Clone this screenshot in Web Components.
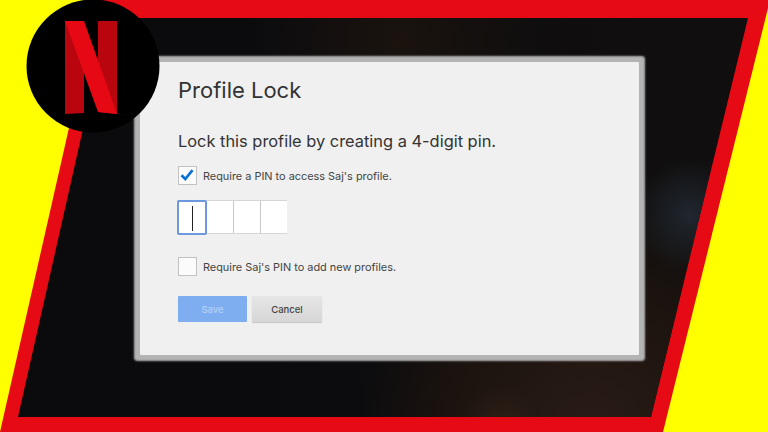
<!DOCTYPE html>
<html>
<head>
<meta charset="utf-8">
<title>Profile Lock</title>
<style>
  html, body { margin: 0; background: #ffff00; }
</style>
</head>
<body>
<thumb-frame>
  <lock-dialog title-text="Profile Lock" lead="Lock this profile by creating a 4-digit pin.">
    <check-row checked>Require a PIN to access Saj's profile.</check-row>
    <pin-input></pin-input>
    <check-row>Require Saj's PIN to add new profiles.</check-row>
    <form-buttons></form-buttons>
  </lock-dialog>
</thumb-frame>

<script>
//
// TEMPLATES
//
const frameTemplate = document.createElement("template");
frameTemplate.innerHTML = `
  <style>
    :host {
      display: block;
      position: relative;
      width: 768px;
      height: 432px;
      overflow: hidden;
      font-family: Inter, "Liberation Sans", sans-serif;
    }
    .backdrop { position: absolute; left: 0; top: 0; }
    .content {
      position: relative;
      box-sizing: border-box;
      height: 100%;
      padding: 62px 0 0 140px;
    }
    .badge { position: absolute; left: 26px; top: 0; }
  </style>
  <svg class="backdrop" width="768" height="432" viewBox="0 0 768 432">
    <defs>
      <linearGradient id="base" gradientUnits="userSpaceOnUse" x1="250" y1="0" x2="640" y2="0">
        <stop offset="0" stop-color="#0b0b0e"/>
        <stop offset="1" stop-color="#100e0e"/>
      </linearGradient>
      <radialGradient id="warm" gradientUnits="userSpaceOnUse" cx="590" cy="430" r="230">
        <stop offset="0" stop-color="#2a1c17"/>
        <stop offset="0.55" stop-color="#21160f" stop-opacity="0.8"/>
        <stop offset="1" stop-color="#21160f" stop-opacity="0"/>
      </radialGradient>
      <radialGradient id="spot" gradientUnits="userSpaceOnUse" cx="500" cy="425" r="40">
        <stop offset="0" stop-color="#33241a" stop-opacity="0.6"/>
        <stop offset="1" stop-color="#33241a" stop-opacity="0"/>
      </radialGradient>
      <radialGradient id="cool" gradientUnits="userSpaceOnUse" cx="690" cy="215" r="58">
        <stop offset="0" stop-color="#20272f"/>
        <stop offset="1" stop-color="#20272f" stop-opacity="0"/>
      </radialGradient>
      <radialGradient id="top" gradientUnits="userSpaceOnUse" cx="400" cy="40" r="150">
        <stop offset="0" stop-color="#1a130e"/>
        <stop offset="1" stop-color="#1a130e" stop-opacity="0"/>
      </radialGradient>
    </defs>
    <rect width="768" height="432" fill="#ffff00"/>
    <polygon points="98,0 770,0 663,432 0,432" fill="#e50a13"/>
    <polygon points="108,18 748,18 651,417 18,417" fill="url(#base)"/>
    <polygon points="108,18 748,18 651,417 18,417" fill="url(#warm)"/>
    <polygon points="108,18 748,18 651,417 18,417" fill="url(#spot)"/>
    <polygon points="108,18 748,18 651,417 18,417" fill="url(#cool)"/>
    <polygon points="108,18 748,18 651,417 18,417" fill="url(#top)"/>
  </svg>
  <div class="content"><slot></slot></div>
  <svg class="badge" width="134" height="134" viewBox="0 0 134 134">
    <circle cx="67" cy="66" r="66.5" fill="#000"/>
    <polygon points="39,21 58,21 58,113 39,114" fill="#b9050e"/>
    <polygon points="72,21 91,21 91,114 72,112" fill="#b9050e"/>
    <polygon points="39,21 58,21 91,114 72,112" fill="#e60914"/>
  </svg>
`;

const dialogTemplate = document.createElement("template");
dialogTemplate.innerHTML = `
  <style>
    :host {
      display: block;
      box-sizing: border-box;
      width: 499px;
      height: 293px;
      padding: 15px 38px 0;
      background: #f0f0f0;
      color: #333;
      border-radius: 1px;
      box-shadow: 0 0 2px 5.5px #b4b4b4;
    }
    h1 {
      margin: 0;
      font-size: 22px;
      line-height: 26px;
      font-weight: 400;
      color: #333;
    }
    p {
      margin: 26px 0 0;
      font-size: 16.4px;
      line-height: 24px;
      font-weight: 400;
    }
  </style>
  <h1></h1>
  <p></p>
  <slot></slot>
`;

const rowTemplate = document.createElement("template");
rowTemplate.innerHTML = `
  <style>
    :host {
      display: flex;
      align-items: center;
      gap: 6px;
      height: 19px;
      margin-top: 13px;
      font-size: 10.9px;
      color: #444;
    }
    .box {
      box-sizing: border-box;
      flex: none;
      width: 19px;
      height: 19px;
      background: #fbfbfb;
      border: 1.5px solid #c2c2c2;
    }
    svg { display: block; }
  </style>
  <div class="box"></div>
  <span><slot></slot></span>
`;

const pinTemplate = document.createElement("template");
pinTemplate.innerHTML = `
  <style>
    :host {
      display: flex;
      width: 110px;
      height: 34px;
      margin: 15px 0 23px -1px;
      background: #fff;
      box-sizing: border-box;
      border-top: 1px solid #d6d6d6;
      border-bottom: 1px solid #d6d6d6;
    }
    .cell {
      flex: 1;
      border-right: 1px solid #c8c8c8;
      position: relative;
    }
    .cell:last-of-type { border-right: 0; }
    .cell:first-of-type {
      flex: none;
      width: 30px;
      box-sizing: border-box;
      margin: -1.5px 0;
      border: 2px solid #6d98dd;
      border-radius: 2px;
    }
    .caret {
      position: absolute;
      left: 13px;
      top: 4px;
      width: 1px;
      height: 25px;
      background: #222;
    }
  </style>
  <div class="cell"><div class="caret"></div></div>
  <div class="cell"></div>
  <div class="cell"></div>
  <div class="cell"></div>
`;

const buttonsTemplate = document.createElement("template");
buttonsTemplate.innerHTML = `
  <style>
    :host {
      display: flex;
      gap: 5px;
      margin-top: 20px;
      font-size: 9.5px;
    }
    .btn {
      width: 70px;
      height: 26px;
      display: flex;
      align-items: center;
      justify-content: center;
      box-sizing: border-box;
      border-radius: 1px;
      font-weight: 500;
    }
    .save { width: 69px; background: #7eaef0; color: #b4d0f4; }
    .cancel {
      background: linear-gradient(#e6e6e6, #d6d6d6);
      color: #444;
      box-shadow: 0 1px 1px #c4c4c4;
    }
  </style>
  <div class="btn save">Save</div>
  <div class="btn cancel">Cancel</div>
`;

function define(name, template, setup) {
  customElements.define(
    name,
    class extends HTMLElement {
      constructor() {
        super();
        this.attachShadow({ mode: "open" });
        this.shadowRoot.appendChild(template.content.cloneNode(true));
      }
      connectedCallback() {
        setup && setup(this);
      }
    }
  );
}

define("thumb-frame", frameTemplate);

define("lock-dialog", dialogTemplate, (el) => {
  el.shadowRoot.querySelector("h1").textContent = el.getAttribute("title-text");
  el.shadowRoot.querySelector("p").textContent = el.getAttribute("lead");
});

define("check-row", rowTemplate, (el) => {
  if (el.hasAttribute("checked")) {
    el.shadowRoot.querySelector(".box").innerHTML = `
      <svg width="16" height="16" viewBox="0 0 16 16">
        <path d="M2.5 8.2 L6.3 12 L13.5 3.2" fill="none" stroke="#0b70d6" stroke-width="2.7"/>
      </svg>`;
  }
});

define("pin-input", pinTemplate);
define("form-buttons", buttonsTemplate);
</script>
</body>
</html>
